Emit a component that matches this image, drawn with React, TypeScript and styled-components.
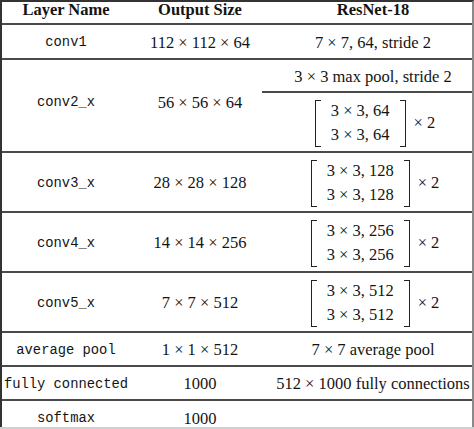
import React from "react";
import styled, { createGlobalStyle } from "styled-components";

const Global = createGlobalStyle`
  html, body { margin: 0; padding: 0; background: #ffffff; overflow: hidden; }
  body { width: 474px; height: 429px; }
`;

const Frame = styled.div`
  width: 474px;
  height: 429px;
  box-sizing: border-box;
  overflow: hidden;
  border-bottom: 2px solid #cfcfcf;
`;

const Table = styled.div`
  display: flex;
  flex-direction: column;
  width: 474px;
  box-sizing: border-box;
  border-top: 2px solid #333333;
  border-left: 2px solid #333333;
  border-right: 2px solid #8a8a8a;
  color: #141414;
  font-family: "Liberation Serif", "Times New Roman", serif;
  font-size: 16.5px;
`;

const Row = styled.div<{ $h: number; $header?: boolean }>`
  display: grid;
  grid-template-columns: 128px 132px 1fr;
  height: ${(p) => p.$h}px;
  flex: none;
  border-bottom: 2px solid #4a4a4a;
  align-items: ${(p) => (p.$header ? "start" : "stretch")};
`;

const HeadCell = styled.div<{ $pl?: number }>`
  text-align: center;
  font-weight: bold;
  line-height: 16px;
  white-space: nowrap;
  padding-left: ${(p) => p.$pl ?? 0}px;
`;

const Cell = styled.div<{ $pl?: number; $pt?: number; $pb?: number }>`
  display: flex;
  align-items: center;
  justify-content: center;
  white-space: nowrap;
  padding-left: ${(p) => p.$pl ?? 0}px;
  padding-top: ${(p) => p.$pt ?? 2}px;
  padding-bottom: ${(p) => p.$pb ?? 0}px;
`;

const Mono = styled.span`
  font-family: "Liberation Mono", "Courier New", monospace;
  font-size: 13.8px;
`;

const Stack = styled.div`
  display: flex;
  flex-direction: column;
`;

const SubCell = styled.div`
  display: flex;
  align-items: center;
  justify-content: center;
  height: 33px;
  flex: none;
  padding-left: 12px;
  padding-top: 2px;
  box-sizing: border-box;
  border-bottom: 2px solid #4a4a4a;
  white-space: nowrap;
`;

const MatrixCell = styled.div`
  flex: 1;
  display: flex;
  align-items: center;
  justify-content: center;
  padding-left: 16px;
  padding-top: 2px;
`;

const Matrix = styled.div`
  display: flex;
  align-items: center;
`;

const Bracket = styled.span<{ $side: "l" | "r" }>`
  width: 6px;
  height: 47px;
  box-sizing: border-box;
  border-top: 1.2px solid #222;
  border-bottom: 1.2px solid #222;
  ${(p) => (p.$side === "l" ? "border-left" : "border-right")}: 1.3px solid #222;
`;

const MatrixBody = styled.div`
  display: flex;
  flex-direction: column;
  align-items: center;
  line-height: 24.5px;
  padding: 0 10px;
  white-space: nowrap;
`;

const Repeat = styled.span`
  margin-left: 8px;
  white-space: nowrap;
`;

type Block = { name: string; size: string; filters: string };

const blocks: Block[] = [
  { name: "conv3_x", size: "28 × 28 × 128", filters: "3 × 3, 128" },
  { name: "conv4_x", size: "14 × 14 × 256", filters: "3 × 3, 256" },
  { name: "conv5_x", size: "7 × 7 × 512", filters: "3 × 3, 512" },
];

function BlockMatrix({ filters }: { filters: string }) {
  return (
    <Matrix>
      <Bracket $side="l" />
      <MatrixBody>
        <span>{filters}</span>
        <span>{filters}</span>
      </MatrixBody>
      <Bracket $side="r" />
      <Repeat>× 2</Repeat>
    </Matrix>
  );
}

export default function App() {
  return (
    <>
      <Global />
      <Frame>
        <Table>
          <Row $h={21} $header>
            <HeadCell>Layer Name</HeadCell>
            <HeadCell $pl={8}>Output Size</HeadCell>
            <HeadCell $pl={12}>ResNet-18</HeadCell>
          </Row>
          <Row $h={33}>
            <Cell>
              <Mono>conv1</Mono>
            </Cell>
            <Cell $pl={8}>112 × 112 × 64</Cell>
            <Cell $pl={12}>7 × 7, 64, stride 2</Cell>
          </Row>
          <Row $h={91}>
            <Cell $pt={0} $pb={6}>
              <Mono>conv2_x</Mono>
            </Cell>
            <Cell $pl={8} $pt={0} $pb={6}>
              56 × 56 × 64
            </Cell>
            <Stack>
              <SubCell>3 × 3 max pool, stride 2</SubCell>
              <MatrixCell>
                <BlockMatrix filters="3 × 3, 64" />
              </MatrixCell>
            </Stack>
          </Row>
          {blocks.map((b) => (
            <Row $h={58} key={b.name}>
              <Cell>
                <Mono>{b.name}</Mono>
              </Cell>
              <Cell $pl={8}>{b.size}</Cell>
              <Cell $pl={16}>
                <BlockMatrix filters={b.filters} />
              </Cell>
            </Row>
          ))}
          <Row $h={32}>
            <Cell>
              <Mono>average pool</Mono>
            </Cell>
            <Cell $pl={8}>1 × 1 × 512</Cell>
            <Cell $pl={12}>7 × 7 average pool</Cell>
          </Row>
          <Row $h={32}>
            <Cell>
              <Mono>fully connected</Mono>
            </Cell>
            <Cell $pl={8}>1000</Cell>
            <Cell $pl={12}>512 × 1000 fully connections</Cell>
          </Row>
          <Row $h={33}>
            <Cell>
              <Mono>softmax</Mono>
            </Cell>
            <Cell $pl={8}>1000</Cell>
            <Cell $pl={12} />
          </Row>
        </Table>
      </Frame>
    </>
  );
}
